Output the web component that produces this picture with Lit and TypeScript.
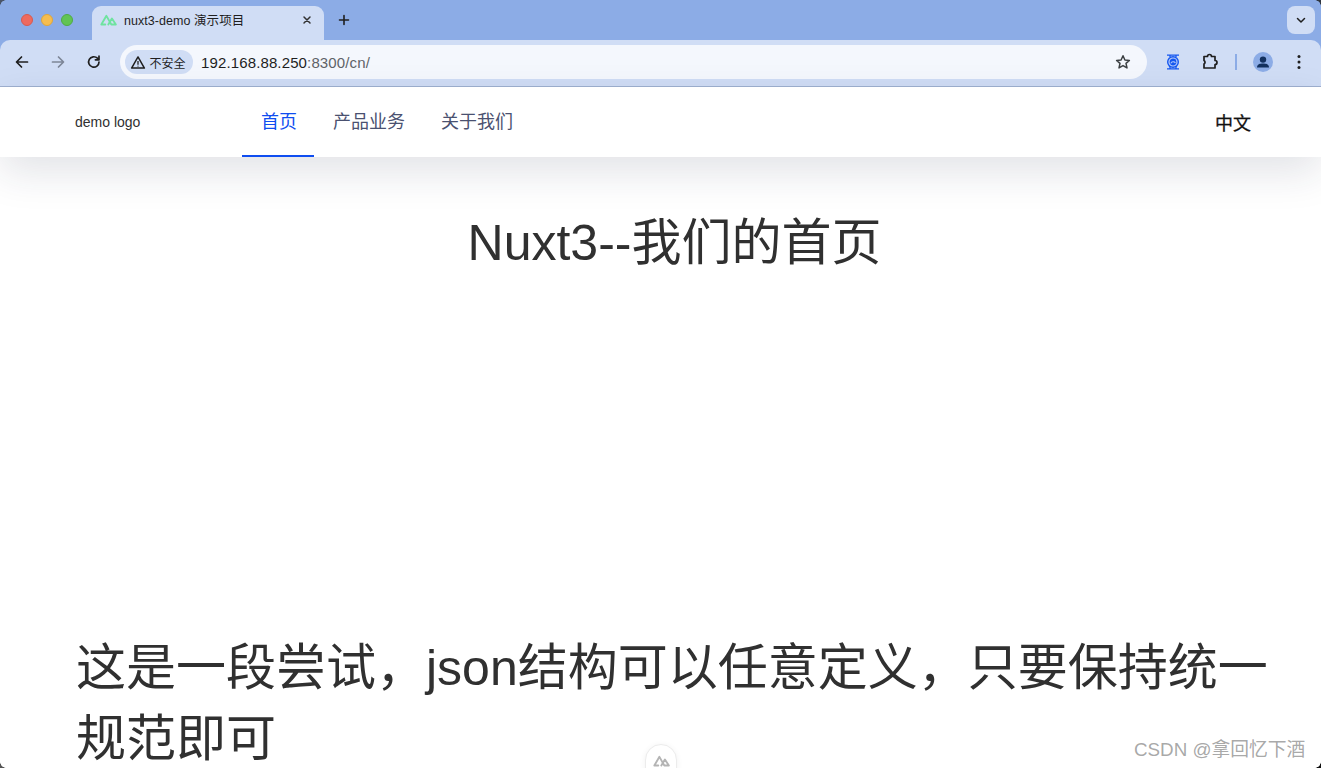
import { LitElement, html, css, svg } from "lit";
import { customElement } from "lit/decorators.js";

const nuxt = (fill: string, w: number, h: number, sw = 2) => html`<svg width=${w} height=${h} viewBox="0 0 18 12"><path d="M5.6 10.8 H1.4 L6.8 1.6 L12 10.8 H16.8 L12.6 4.4 L8.8 10.8" fill="none" stroke=${fill} stroke-width=${sw} stroke-linejoin="round" stroke-linecap="round"/></svg>`;

@customElement("app-root")
export class AppRoot extends LitElement {
  static styles = css`
    :host { display: block; width: 1321px; height: 768px; overflow: hidden; position: relative; background: #fff;
      font-family: "Liberation Sans", "Noto Sans CJK SC", sans-serif; color: #303030; }
    .tabs { height: 40px; background: #8cace6; display: flex; align-items: flex-end; box-sizing: border-box; position: relative; }
    .lights { display: flex; gap: 8px; width: 92px; height: 40px; box-sizing: border-box; padding: 14px 0 0 21px; }
    .light { width: 12px; height: 12px; border-radius: 50%; box-sizing: border-box; }
    .r { background: #ee6a5f; border: 1px solid #d65a50; }
    .y { background: #f6bd4f; border: 1px solid #dea63c; }
    .g { background: #61c454; border: 1px solid #50ab44; }
    .tab { width: 232px; height: 34px; background: #d0ddf5; border-radius: 9px 9px 0 0; display: flex; align-items: center; box-sizing: border-box; padding: 0 12px 7px 8px; gap: 7px; font-size: 12.5px; letter-spacing: 0.05px; color: #1f1f1f; position: relative; }
    .tab-title { flex: 1; white-space: nowrap; }
    .tab-x { display: flex; }
    .plus { margin: 0 0 12px 12px; display: flex; width: 16px; height: 16px; }
    .spacer { flex: 1; }
    .chev { width: 28px; height: 28px; background: #d0ddf5; border-radius: 8px; margin: 0 6px 6px 0; display: flex; align-items: center; justify-content: center; }
    .toolbar { height: 47px; background: #d0ddf5; border-bottom: 1px solid #9fb0cf; box-sizing: border-box; display: flex; align-items: center; padding: 0 0 2px 14px; border-radius: 10px 10px 0 0; }
    .tb-wrap { background: #8cace6; }
    .nav-ico { width: 16px; height: 16px; display: flex; margin-right: 20px; }
    .nav-ico:nth-child(3) { margin-right: 18px; }
    .omni { width: 1027px; height: 34px; background: #f4f7fd; border-radius: 17px; display: flex; align-items: center; box-sizing: border-box; padding: 0 16px 0 5px; font-size: 15px; color: #1f1f1f; }
    .secure { height: 24px; width: 68px; background: #d0ddf5; border-radius: 12px; display: flex; align-items: center; justify-content: center; gap: 3px; font-size: 12px; margin-right: 8px; box-sizing: border-box; padding-right: 2px; }
    .url { flex: 1; letter-spacing: 0.13px; }
    .url span { color: #5f6368; }
    .tb-right { display: flex; align-items: center; padding-left: 18px; }
    .ext { width: 16px; height: 16px; display: flex; }
    .ext2 { margin-left: 20px; display: flex; }
    .sep { width: 1.5px; height: 16px; background: #8cace6; margin: 0 16px 0 16px; }
    .avatar { width: 20px; height: 20px; border-radius: 50%; background: #8cace6; display: flex; align-items: center; justify-content: center; overflow: hidden; }
    .more { margin-left: 24px; display: flex; }
    .header { height: 70px; display: flex; align-items: center; background: #fff; box-shadow: 0 15px 40px rgba(30, 40, 70, 0.13); position: relative; padding: 0 70px 0 75px; box-sizing: border-box; }
    .logo { width: 167px; font-size: 14px; color: #303030; }
    .menu { display: flex; flex: 1; height: 100%; }
    .item { padding: 0 17px 0 19px; height: 100%; box-sizing: border-box; line-height: 70px; font-size: 18px; color: #4a5170; }
    .item.active { color: #0f4df0; border-bottom: 2px solid #0f4df0; }
    .lang { font-size: 18px; color: #111; -webkit-text-stroke: 0.3px #111; }
    main { padding: 0 48px 0 76px; }
    h1 { margin: 0; padding-top: 50px; box-sizing: border-box; font-size: 50px; font-weight: 400; text-align: center; line-height: 72px; height: 476px; }
    p { margin: 0; font-size: 50px; line-height: 71px; }
    .devtool { position: absolute; left: 645px; top: 744px; width: 32px; height: 40px; background: #fff; border: 1px solid #ececec; border-radius: 16px; box-shadow: 0 1px 6px rgba(0,0,0,.06); display: flex; justify-content: center; padding-top: 10px; box-sizing: border-box; }
    .mark { position: absolute; left: 1134px; top: 734px; font-size: 18.8px; color: rgba(130, 130, 130, 0.7); white-space: nowrap; }
    .corner { position: absolute; width: 6px; height: 6px; }
    .tl { left: 0; top: 0; background: radial-gradient(circle at 100% 100%, transparent 5.5px, #4a5568 6px); }
    .tr { right: 0; top: 0; background: radial-gradient(circle at 0 100%, transparent 5.5px, #2f3640 6px); }
    .br { right: 0; bottom: 0; background: radial-gradient(circle at 0 0, transparent 5.5px, #111 6px); }
    .bl { left: 0; bottom: 0; background: radial-gradient(circle at 100% 0, transparent 5.5px, #555 6px); }
  `;

  render() {
    const s = (d: unknown, c = "#1f1f1f", w = 1.7) => svg`<path d=${d as string} fill="none" stroke=${c} stroke-width=${w} stroke-linecap="round" stroke-linejoin="round"/>`;
    return html`
      <div class="tabs">
        <div class="lights"><div class="light r"></div><div class="light y"></div><div class="light g"></div></div>
        <div class="tab">
          ${nuxt("#6fe3a0", 17, 12)}
          <span class="tab-title">nuxt3-demo 演示项目</span>
          <span class="tab-x"><svg width="10" height="10" viewBox="0 0 10 10">${s("M2 2 L8 8 M8 2 L2 8", "#333", 1.5)}</svg></span>
        </div>
        <span class="plus"><svg width="16" height="16" viewBox="0 0 16 16">${s("M8 3.5 V12.5 M3.5 8 H12.5", "#1f1f1f", 1.6)}</svg></span>
        <div class="spacer"></div>
        <div class="chev"><svg width="12" height="12" viewBox="0 0 12 12">${s("M2.5 4.5 L6 8 L9.5 4.5", "#1f1f1f", 1.5)}</svg></div>
      </div>
      <div class="tb-wrap"><div class="toolbar">
        <span class="nav-ico"><svg width="16" height="16" viewBox="0 0 16 16">${s("M13.5 8 H3 M7.5 3 L2.5 8 L7.5 13")}</svg></span>
        <span class="nav-ico"><svg width="16" height="16" viewBox="0 0 16 16">${s("M2.5 8 H13 M8.5 3 L13.5 8 L8.5 13", "#7d8697")}</svg></span>
        <span class="nav-ico"><svg width="16" height="16" viewBox="0 0 16 16">${s("M13 8 A5.2 5.2 0 1 1 11.4 4.2 L13 5.8 M13 2.2 V5.8 H9.4")}</svg></span>
        <div class="omni">
          <div class="secure">
            <svg width="16" height="15" viewBox="0 0 15 14"><path d="M7.5 1.8 L13.5 12.2 H1.5 Z" fill="none" stroke="#1f1f1f" stroke-width="1.4" stroke-linejoin="round"/><path d="M7.5 5.5 V9 M7.5 10 V10.8" stroke="#1f1f1f" stroke-width="1.2"/></svg>
            <span>不安全</span>
          </div>
          <div class="url">192.168.88.250<span>:8300/cn/</span></div>
          <svg width="16" height="16" viewBox="0 0 16 16"><path d="M8 1.8 L9.9 6 L14.4 6.4 L11 9.4 L12 13.9 L8 11.6 L4 13.9 L5 9.4 L1.6 6.4 L6.1 6 Z" fill="none" stroke="#3c4043" stroke-width="1.5" stroke-linejoin="round"/></svg>
        </div>
        <div class="tb-right">
          <span class="ext"><svg width="16" height="16" viewBox="0 0 16 16"><path d="M2 1.2 H14 M2 14.8 H14 M5 1.2 V3 M11 1.2 V3 M5 13 V14.8 M11 13 V14.8" stroke="#1557f0" stroke-width="1.3" fill="none"/><circle cx="8" cy="8" r="6" fill="#1557f0"/><circle cx="8" cy="8" r="4" fill="none" stroke="#b9cdf8" stroke-width="1.2"/><path d="M5.8 9.4 A2.6 2.6 0 0 1 10.4 9" stroke="#b9cdf8" stroke-width="1.1" fill="none"/></svg></span>
          <span class="ext2"><svg width="18" height="18" viewBox="0 0 18 18"><path d="M3 3.5 H6.5 A2 2 0 0 1 10.5 3.5 H14 V7.5 A2 2 0 0 1 14 11.5 V15 H3 V11 A2 2 0 0 0 3 7.5 Z" fill="none" stroke="#1f1f1f" stroke-width="1.7" stroke-linejoin="round"/></svg></span>
          <span class="sep"></span>
          <span class="avatar"><svg width="20" height="20" viewBox="0 0 20 20"><circle cx="10" cy="7.6" r="3.2" fill="#13315f"/><path d="M4 15.5 C4 12 7 11.4 10 11.4 C13 11.4 16 12 16 15.5 Z" fill="#13315f"/></svg></span>
          <span class="more"><svg width="4" height="16" viewBox="0 0 4 16"><circle cx="2" cy="2.5" r="1.5" fill="#1f1f1f"/><circle cx="2" cy="8" r="1.5" fill="#1f1f1f"/><circle cx="2" cy="13.5" r="1.5" fill="#1f1f1f"/></svg></span>
        </div>
      </div></div>
      <header class="header">
        <div class="logo">demo logo</div>
        <nav class="menu">
          <div class="item active">首页</div>
          <div class="item">产品业务</div>
          <div class="item">关于我们</div>
        </nav>
        <div class="lang">中文</div>
      </header>
      <main>
        <h1>Nuxt3--我们的首页</h1>
        <p>这是一段尝试，json结构可以任意定义，只要保持统一规范即可</p>
      </main>
      <div class="devtool">${nuxt("#b4b4b4", 17, 12)}</div>
      <div class="mark">CSDN @拿回忆下酒</div>
      <div class="corner tl"></div><div class="corner tr"></div><div class="corner br"></div><div class="corner bl"></div>
    `;
  }
}
